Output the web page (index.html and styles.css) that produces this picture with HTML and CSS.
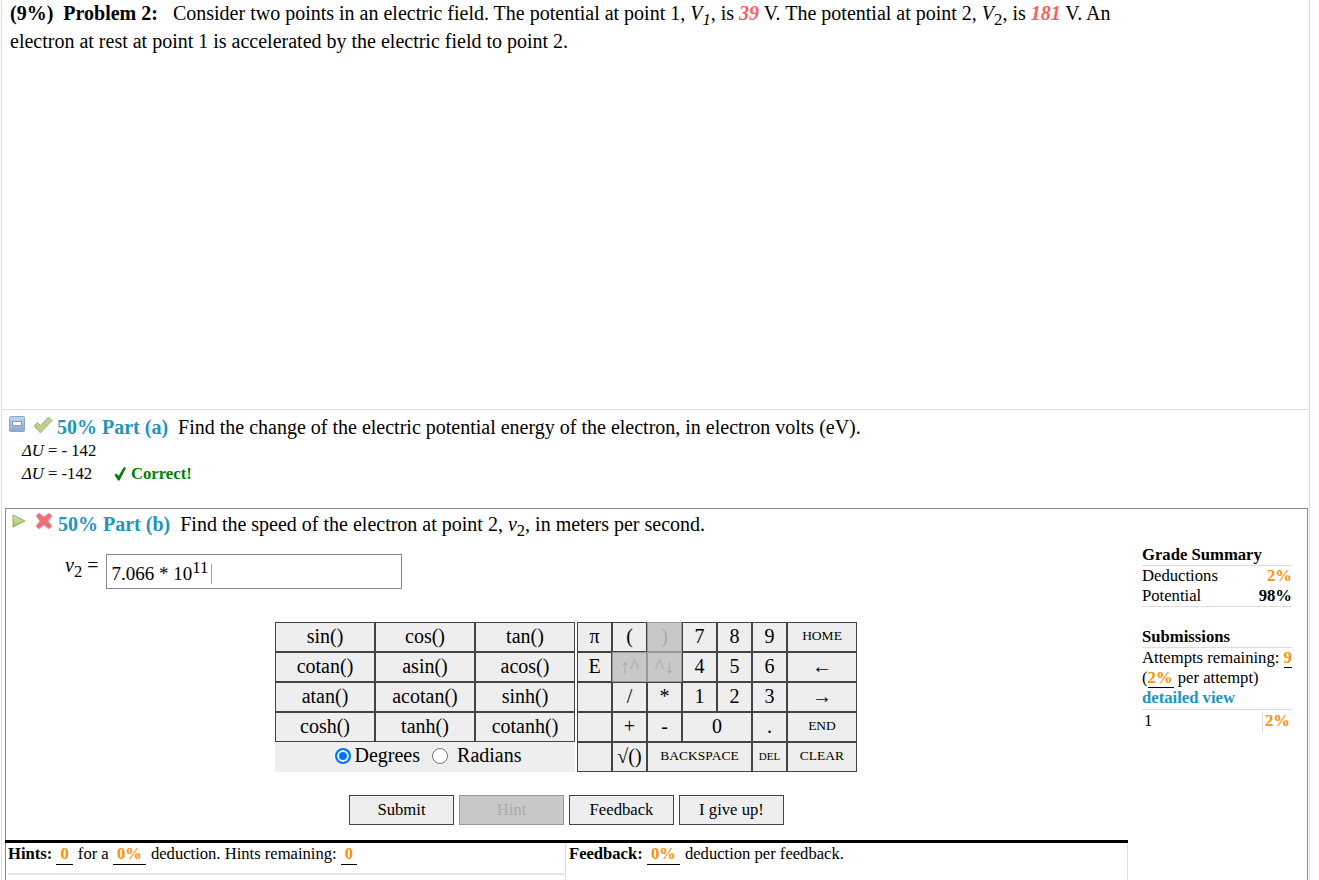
FILE: index.html

```html
<!DOCTYPE html>
<html lang="en">
<head>
  <meta charset="UTF-8">
  <title>Problem 2</title>
  <link rel="stylesheet" href="styles.css">
</head>
<body>
  <div class="page">
    <div class="problem">
      <b>(9%)&nbsp; Problem 2:</b>&nbsp;&nbsp; Consider two points in an electric field. The potential at point 1, <i>V<sub>1</sub></i>, is <b class="given">39</b> V. The potential at point 2, <i>V</i><sub>2</sub>, is <b class="given">181</b> V. An electron at rest at point 1 is accelerated by the electric field to point 2.
    </div>

    <div class="part-a">
      <div class="part-head">
        <svg class="icon-toggle" width="16" height="16" viewBox="0 0 16 16">
          <defs>
            <linearGradient id="toggleFill" x1="0" y1="0" x2="0" y2="1">
              <stop offset="0" stop-color="#c3d5ec"/>
              <stop offset="1" stop-color="#86a8d2"/>
            </linearGradient>
          </defs>
          <rect x="0.5" y="0.5" width="15" height="15" rx="1" fill="url(#toggleFill)" stroke="#8aa6ca"/>
          <rect x="3.5" y="5.5" width="9" height="4" fill="#fff" stroke="#6f8db5" stroke-width="0.8"/>
        </svg>
        <svg class="icon-check" width="20" height="18" viewBox="0 0 20 18">
          <path d="M1 10l3.500-3.500 3 3L15.500 1 19 4.500 7.500 17z" fill="#b9d383" stroke="#a9ad96" stroke-linejoin="round"/>
        </svg>
        <span class="part-title">50% Part (a)</span>
        <span class="part-text">Find the change of the electric potential energy of the electron, in electron volts (eV).</span>
      </div>
      <div class="answer-line"><i>ΔU</i> = - 142</div>
      <div class="answer-line checked">
        <span class="answer-value"><i>ΔU</i> = -142</span>
        <svg class="tick" width="12" height="14" viewBox="0 0 12 14">
          <path d="M0.500 8L2.500 6.500 4.500 9 10 0 12 1 5.500 13.500H4z" fill="#008000"/>
        </svg>
        <span class="correct">Correct!</span>
      </div>
    </div>

    <div class="part-b">
      <div class="part-head">
        <svg class="icon-play" width="14" height="14" viewBox="0 0 14 14">
          <defs>
            <linearGradient id="playFill" x1="0" y1="0" x2="0" y2="1">
              <stop offset="0" stop-color="#d4e6a6"/>
              <stop offset="1" stop-color="#a6c96a"/>
            </linearGradient>
          </defs>
          <path d="M1 1l12 6-12 6z" fill="url(#playFill)" stroke="#8fae62" stroke-linejoin="round"/>
        </svg>
        <svg class="icon-cross" width="18" height="18" viewBox="0 0 18 18">
          <path d="M4 1l5 4 5-4 3 3-4 5 4 5-3 3-5-4-5 4-3-3 4-5-4-5z" fill="#ee6f79" stroke="#eb9aa0" stroke-linejoin="round"/>
        </svg>
        <span class="part-title">50% Part (b)</span>
        <span class="part-text">Find the speed of the electron at point 2, <i>v</i><sub>2</sub>, in meters per second.</span>
      </div>

      <div class="part-body">
        <div class="part-main">
          <div class="answer-row">
            <span class="answer-label"><i>v</i><sub>2</sub> =</span>
            <div class="answer-input">7.066 * 10<sup>11</sup><span class="caret"></span></div>
          </div>

          <div class="keypad">
            <div class="functions">
              <div class="key">sin()</div>
              <div class="key">cos()</div>
              <div class="key">tan()</div>
              <div class="key">cotan()</div>
              <div class="key">asin()</div>
              <div class="key">acos()</div>
              <div class="key">atan()</div>
              <div class="key">acotan()</div>
              <div class="key">sinh()</div>
              <div class="key">cosh()</div>
              <div class="key">tanh()</div>
              <div class="key">cotanh()</div>
              <div class="angle-mode">
                <span class="radio on"></span><span class="angle-label">Degrees</span>
                <span class="radio"></span><span class="angle-label second">Radians</span>
              </div>
            </div>
            <div class="numbers">
              <div class="key">π</div>
              <div class="key">(</div>
              <div class="key off">)</div>
              <div class="key">7</div>
              <div class="key">8</div>
              <div class="key">9</div>
              <div class="key small">HOME</div>

              <div class="key">E</div>
              <div class="key off">↑^</div>
              <div class="key off">^↓</div>
              <div class="key">4</div>
              <div class="key">5</div>
              <div class="key">6</div>
              <div class="key">←</div>

              <div class="key"></div>
              <div class="key">/</div>
              <div class="key">*</div>
              <div class="key">1</div>
              <div class="key">2</div>
              <div class="key">3</div>
              <div class="key">→</div>

              <div class="key"></div>
              <div class="key">+</div>
              <div class="key">-</div>
              <div class="key wide">0</div>
              <div class="key">.</div>
              <div class="key small">END</div>

              <div class="key"></div>
              <div class="key sqrt">√()</div>
              <div class="key wide-3 small">BACKSPACE</div>
              <div class="key tiny">DEL</div>
              <div class="key small">CLEAR</div>
            </div>
          </div>

          <div class="actions">
            <button class="action">Submit</button>
            <button class="action off">Hint</button>
            <button class="action">Feedback</button>
            <button class="action">I give up!</button>
          </div>

          <div class="notes">
            <div class="note hints">
              <b>Hints:</b> <span class="stat">0</span> for a <span class="stat">0%</span> deduction. Hints remaining: <span class="stat">0</span>
              <div class="note-rule"></div>
            </div>
            <div class="note feedback">
              <b>Feedback:</b> <span class="stat">0%</span> deduction per feedback.
            </div>
          </div>
        </div>

        <div class="side">
          <div class="side-title">Grade Summary</div>
          <div class="side-group">
            <div class="side-row"><span>Deductions</span><b class="orange">2%</b></div>
            <div class="side-row"><span>Potential</span><b>98%</b></div>
          </div>
          <div class="side-title second">Submissions</div>
          <div class="side-text">
            Attempts remaining: <span class="stat-tight">9</span><br>
            (<span class="stat-tight wider">2%</span> per attempt)<br>
            <b class="link">detailed view</b>
          </div>
          <div class="attempts">
            <span class="attempt-no">1</span>
            <b class="attempt-pct orange">2%</b>
          </div>
        </div>
      </div>
    </div>
  </div>
</body>
</html>
```

FILE: styles.css

```css
* {
  box-sizing: border-box;
}

html, body {
  height: 100%;
  overflow: hidden;
}

body {
  margin: 0;
  background-color: #fff;
  color: #000;
  font-family: "Liberation Serif", serif;
}

sub {
  font-size: 83%;
  line-height: 0;
}

sup {
  font-size: 88%;
  line-height: 0;
}

.page {
  width: 1309px;
  height: 880px;
  margin-left: 1px;
  border-left: 1px solid #ddd;
  border-right: 1px solid #ddd;
  overflow: hidden;
}

/* problem statement */
.problem {
  height: 411px;
  margin-top: -1px;
  padding: 0 178px 0 8px;
  font-size: 20px;
  line-height: 28px;
  border-bottom: 1px solid #ddd;
}

.given {
  color: #ff5c5c;
  font-style: italic;
}

/* part headers */
.part-a {
  height: 98px;
  padding: 5px 0 0 7px;
}

.part-head {
  display: flex;
  align-items: center;
  height: 24px;
  font-size: 20px;
  white-space: pre;
}

.icon-toggle {
  margin: 0 8px 6px 0;
}

.icon-check {
  margin: 0 4px 5px 0;
}

.part-title {
  color: #2196bb;
  font-weight: bold;
  margin-right: 10px;
}

.answer-line {
  padding-left: 13px;
  font-size: 16.67px;
  line-height: 23px;
}

.answer-line.checked {
  display: flex;
  align-items: center;
}

.answer-value {
  width: 92px;
}

.correct {
  color: #008000;
  font-weight: bold;
}

.tick {
  margin-right: 5px;
}

/* part b */
.part-b {
  height: 380px;
  margin: 0 1px 0 3px;
  border: 1px solid #888;
  border-bottom: none;
}

.part-b .part-head {
  padding: 2px 0 0 6px;
  height: 28px;
}

.icon-play {
  margin: 0 9px 7px 0;
}

.icon-cross {
  margin: 0 5px 7px 0;
}

.part-body {
  display: flex;
}

.part-main {
  width: 1122px;
}

.answer-row {
  display: flex;
  align-items: flex-start;
  margin-top: 17px;
  padding-left: 59px;
}

.answer-label {
  font-size: 20px;
  margin-right: 8px;
}

.answer-input {
  width: 296px;
  height: 35px;
  border: 1px solid #888;
  padding: 4px 4px 2px;
  font-size: 19px;
  line-height: 30px;
}

.caret {
  display: inline-block;
  width: 1px;
  height: 20px;
  background-color: #f4855c;
  margin-left: 3px;
  vertical-align: -4px;
}

/* keypad */
.keypad {
  display: flex;
  gap: 2px;
  margin: 33px 0 0 269px;
}

.functions {
  display: grid;
  grid-template-columns: repeat(3, 100px);
  grid-auto-rows: 30px;
  width: 300px;
}

.numbers {
  display: grid;
  grid-template-columns: repeat(6, 35px) 70px;
  grid-auto-rows: 30px;
  width: 280px;
}

.key {
  display: flex;
  align-items: center;
  justify-content: center;
  padding-bottom: 2px;
  background-color: #eee;
  border: 1px solid #444;
  font-size: 20px;
  white-space: nowrap;
}

.key.off {
  background-color: #c8c8c8;
  border-color: #999;
  color: #aaa;
}

.key.small {
  font-size: 13.5px;
}

.key.tiny {
  font-size: 11px;
}

.key.wide {
  grid-column: span 2;
}

.key.wide-3 {
  grid-column: span 3;
}

.angle-mode {
  grid-column: span 3;
  display: flex;
  align-items: center;
  justify-content: center;
  padding: 0 0 3px 6px;
  background-color: #eee;
  font-size: 20px;
}

.angle-label {
  margin: 0 12px 0 4px;
}

.angle-label.second {
  margin: 0 0 0 9px;
}

.radio {
  width: 16px;
  height: 16px;
  border-radius: 50%;
  border: 1px solid #767676;
  background-color: #fff;
}

.radio.on {
  border: 2px solid #0075ff;
  background-color: #0075ff;
  box-shadow: inset 0 0 0 2px #fff;
}

/* buttons */
.actions {
  display: flex;
  gap: 5px;
  margin: 23px 0 0 343px;
}

.action {
  width: 105px;
  height: 30px;
  padding: 0;
  background-color: #eee;
  border: 1px solid #444;
  border-radius: 0;
  font-family: inherit;
  font-size: 16.67px;
  color: #000;
}

.action.off {
  background-color: #c8c8c8;
  border-color: #999;
  color: #aaa;
}

/* hints and feedback */
.notes {
  display: flex;
  margin: 15px 0 0 -1px;
  border-top: 3px solid #000;
  height: 60px;
}

.note {
  padding: 0 3px;
  font-size: 16.6px;
  line-height: 22px;
  border-right: 1px solid #ddd;
}

.hints {
  width: 561px;
}

.feedback {
  width: 562px;
}

.stat {
  display: inline-block;
  color: #ff9000;
  font-weight: bold;
  padding: 0 4px;
  margin-right: 1px;
  border-bottom: 1px solid #000;
  line-height: 20px;
}

.note-rule {
  height: 2px;
  background-color: #e6e6e6;
  margin: 8px 0 0;
  width: 556px;
}

/* side panel */
.side {
  width: 150px;
  margin: 8px 0 0 14px;
  font-size: 16.67px;
  line-height: 20px;
}

.side-title {
  font-weight: bold;
  border-bottom: 1px solid #ddd;
  line-height: 20px;
}

.side-title.second {
  margin-top: 20px;
}

.side-group {
  border-bottom: 1px solid #ddd;
}

.side-row {
  display: flex;
  justify-content: space-between;
}

.orange {
  color: #ff9000;
}

.link {
  color: #2196bb;
}

.stat-tight {
  color: #ff9000;
  font-weight: bold;
  border-bottom: 1px solid #000;
}

.stat-tight.wider {
  padding-right: 1px;
}

.attempts {
  display: flex;
  justify-content: space-between;
  margin-top: 1px;
  padding-top: 1px;
  border-top: 1px solid #ddd;
  height: 24px;
}

.attempt-no {
  padding-left: 2px;
}

.attempt-pct {
  width: 30px;
  border-left: 1px solid #ddd;
  padding-left: 2px;
}
```
